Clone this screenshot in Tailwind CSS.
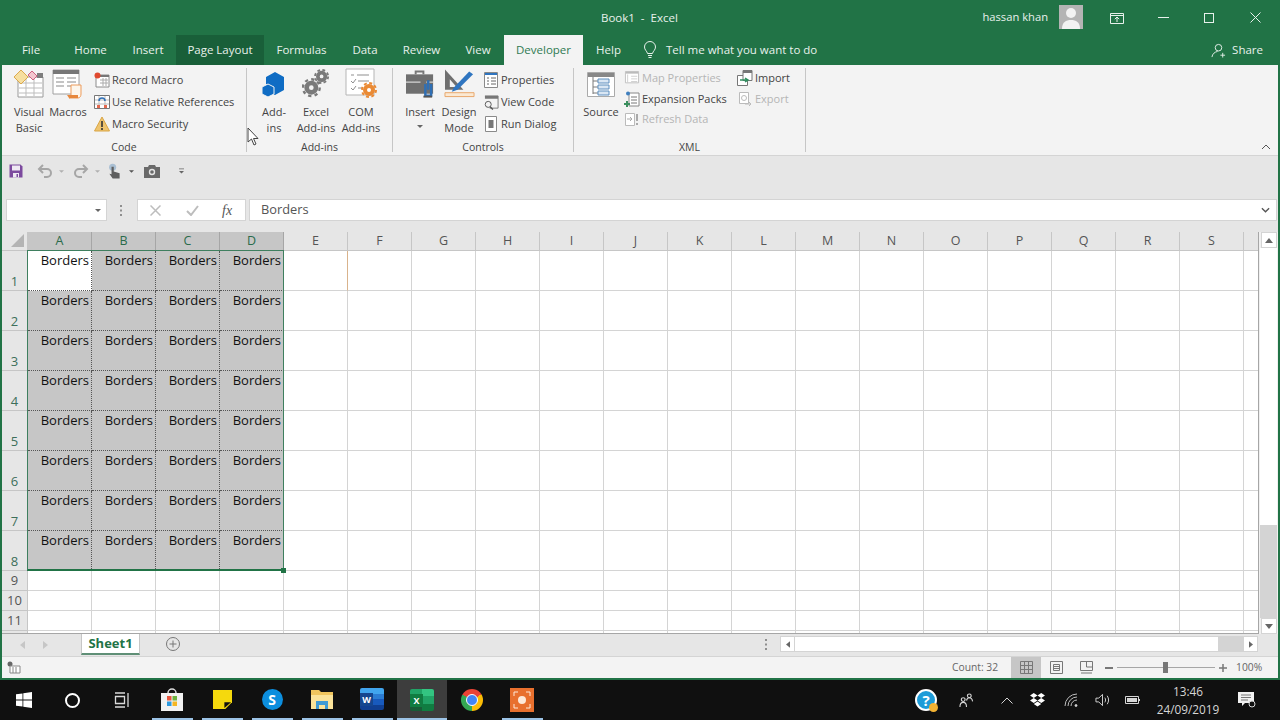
<!DOCTYPE html>
<html lang="en">
<head>
<meta charset="UTF-8">
<title>Book1 - Excel</title>
<script src="https://cdn.jsdelivr.net/npm/@tailwindcss/browser@4"></script>
</head>
<body class="bg-black">
<div class="w-[1280px] h-[720px] overflow-hidden flex flex-col font-['Open_Sans',sans-serif] text-[11px] text-[#444]">

  <!-- excel window -->
  <div class="h-[680px] flex flex-col bg-[#217346] px-[2px] pb-[2px]">

    <!-- title bar -->
    <div class="h-[35px] -mx-[2px] flex items-center text-[#e8f1ec] relative">
      <div class="absolute left-[601px] top-[9px] text-[11.5px] whitespace-pre">Book1  -  Excel</div>
      <div class="ml-auto flex items-center h-full">
        <span class="text-[11.2px] mr-[11px]">hassan khan</span>
        <div class="w-[24px] h-[24px] bg-[#b4b4b4] mr-[27px] mb-[2px] overflow-hidden">
          <svg viewBox="0 0 24 24" class="w-[24px] h-[24px]"><circle cx="12" cy="8" r="5" fill="#f2f2f2"/><path d="M3 24c0-7 4-9 9-9s9 2 9 9z" fill="#f2f2f2"/></svg>
        </div>
        <svg viewBox="0 0 14 12" class="w-[14px] h-[12px] mr-[34px]" fill="none" stroke="#e8f1ec"><path d="M.5 1.5h13v10H.5zM.5 3.5h13M7 10V5M4.8 7.2 7 5l2.2 2.2"/></svg>
        <div class="w-[11px] h-[1px] bg-[#e8f1ec] mr-[35px]"></div>
        <div class="w-[10px] h-[10px] border border-[#e8f1ec] mr-[36px]"></div>
        <svg viewBox="0 0 11 11" class="w-[11px] h-[11px] mr-[19px]" stroke="#e8f1ec"><path d="M.5.5l10 10M10.5.5l-10 10"/></svg>
      </div>
    </div>

    <!-- ribbon tabs -->
    <div class="h-[30px] -mx-[2px] flex text-[#e8f1ec] text-[11.5px]">
      <div class="ml-[8px] w-[46px] flex items-center justify-center">File</div>
      <div class="ml-[7px] w-[59px] flex items-center justify-center">Home</div>
      <div class="w-[56px] flex items-center justify-center">Insert</div>
      <div class="w-[88px] flex items-center justify-center bg-[#195f39]">Page Layout</div>
      <div class="w-[75px] flex items-center justify-center">Formulas</div>
      <div class="w-[52px] flex items-center justify-center">Data</div>
      <div class="w-[61px] flex items-center justify-center">Review</div>
      <div class="w-[52px] flex items-center justify-center">View</div>
      <div class="w-[79px] flex items-center justify-center bg-[#f3f3f3] text-[#2f7a52]">Developer</div>
      <div class="w-[51px] flex items-center justify-center">Help</div>
      <div class="ml-[9px] flex items-center">
        <svg viewBox="0 0 14 18" class="w-[14px] h-[18px] mr-[9px]" fill="none" stroke="#e8f1ec"><path d="M4.5 12.5C4 10 1.5 9 1.5 6a5.5 5.5 0 0 1 11 0c0 3-2.500 4-3 6.500zM5 14.500h4M5.500 16.500h3"/></svg>
        <span>Tell me what you want to do</span>
      </div>
      <div class="ml-auto mr-[17px] flex items-center">
        <svg viewBox="0 0 16 16" class="w-[15px] h-[15px] mr-[6px]" fill="none" stroke="#e8f1ec"><circle cx="8" cy="5" r="3.500"/><path d="M1 15c.5-3.500 3-5.500 6-6M10 13h5M12.500 10.500v5"/></svg>
        <span>Share</span>
      </div>
    </div>

    <!-- ribbon -->
    <div class="h-[90px] bg-[#f3f3f3] flex relative">

      <!-- Code -->
      <div class="w-[245px] flex flex-col border-r border-[#c6c6c6] my-[3px]">
        <div class="h-[72px] shrink-0 flex">
          <div class="w-[40px] ml-[7px] flex flex-col items-center">
            <svg viewBox="0 0 30 30" class="w-[30px] h-[30px] mt-[1px]">
              <path d="M4 8h25v20H4z" fill="#fff" stroke="#9a9a9a"/><path d="M5 14h23M5 19h23M5 24h23M12 9v18M20 9v18" stroke="#bdbdbd"/>
              <path d="M0 8 7 1l7 7-7 7z" fill="#f6dfa0" stroke="#dba94e"/><path d="M14 6l4-4 5 5-4 4z" fill="#f3c6cf" stroke="#cf5f7e"/><path d="M23 4h6v5h-6z" fill="#7d7d7d"/>
            </svg>
            <div class="mt-[5px] text-center leading-[16px]">Visual<br>Basic</div>
          </div>
          <div class="w-[40px] -ml-[1px] flex flex-col items-center">
            <svg viewBox="0 0 32 30" class="w-[32px] h-[30px] mt-[1px]">
              <path d="M1 1h26v24H1z" fill="#fff" stroke="#a0a0a0"/><path d="M1 1h26v4H1z" fill="#777"/><path d="M4 9h8M15 9h9M4 13h8M15 13h9M4 17h8M15 17h9" stroke="#c4c4c4" stroke-width="2"/>
              <path d="M19 16h10v9c0 2-1 4-3 4H17c2 0 2-2 2-4z" fill="#fdf6ec" stroke="#ed9b5a"/><path d="M15 26h11v3H17z" fill="#e8883c"/>
            </svg>
            <div class="mt-[5px] text-center leading-[16px]">Macros</div>
          </div>
          <div class="ml-[6px] mt-[1px] flex flex-col">
            <div class="h-[22px] flex items-center whitespace-nowrap">
              <svg viewBox="0 0 16 16" class="w-[16px] h-[16px] mr-[2px]"><path d="M2 3h13v12H2z" fill="#fff" stroke="#8c8c8c"/><path d="M2 3h13v2H2z" fill="#777"/><path d="M6 8h8M6 11h8M9 6v8M12 6v8" stroke="#aaa"/><circle cx="3.500" cy="3.500" r="3" fill="#e0492f"/></svg>Record Macro
            </div>
            <div class="h-[22px] flex items-center whitespace-nowrap">
              <svg viewBox="0 0 16 16" class="w-[16px] h-[16px] mr-[2px]"><path d="M.5 1.500h15v13H.5z" fill="#fff" stroke="#777"/><path d="M1 6h14M1 10h14M5 2v12M11 2v12" stroke="#bbb"/><path d="M3 11h3v3H3zM10 11h3v3h-3z" fill="#e4694f"/><path d="M5 7a3 3 0 0 1 6 0" stroke="#2f6fb5" stroke-width="1.500" fill="none"/></svg>Use Relative References
            </div>
            <div class="h-[22px] flex items-center whitespace-nowrap">
              <svg viewBox="0 0 16 16" class="w-[16px] h-[16px] mr-[2px]"><path d="M8 1l7.500 14H.5z" fill="#eec46f" stroke="#d9a545"/><path d="M8 5v6M8 12v2" stroke="#333" stroke-width="1.600"/></svg>Macro Security
            </div>
          </div>
        </div>
        <div class="shrink-0 text-center text-[10.5px] leading-[14px]">Code</div>
      </div>

      <!-- Add-ins -->
      <div class="w-[146px] flex flex-col border-r border-[#c6c6c6] my-[3px] relative">
        <div class="h-[72px] shrink-0 flex">
          <div class="w-[42px] ml-[6px] flex flex-col items-center">
            <svg viewBox="0 0 24 28" class="w-[24px] h-[28px] mt-[2px]">
              <path d="M13 2l9 5v13l-9 5-4-2V16l-5-2V7z" fill="#0f6cc4"/><path d="M6 14l6 3v7l-6 3-6-3v-7z" fill="#0f6cc4" stroke="#f3f3f3"/>
            </svg>
            <div class="mt-[6px] text-center leading-[16px]">Add-<br>ins</div>
          </div>
          <div class="w-[44px] flex flex-col items-center -ml-[1px]">
            <svg viewBox="0 0 30 30" class="w-[28px] h-[30px]" fill="none" stroke="#7a7a7a">
              <circle cx="21" cy="8" r="4" stroke-width="4"/><circle cx="21" cy="8" r="7" stroke-width="2" stroke-dasharray="3 2.500"/>
              <circle cx="10" cy="20" r="5" stroke-width="5"/><circle cx="10" cy="20" r="9" stroke-width="2.500" stroke-dasharray="3.500 3.500"/>
            </svg>
            <div class="mt-[6px] text-center leading-[16px] whitespace-nowrap">Excel<br>Add-ins</div>
          </div>
          <div class="w-[46px] flex flex-col items-center">
            <svg viewBox="0 0 32 30" class="w-[32px] h-[30px]" fill="none">
              <path d="M1 1h28v26H1z" fill="#fff" stroke="#b5b5b5"/><path d="M6 7h3M12 7h12M6 13l2 2 3-4M13 13h11M6 20l2 2 3-4M13 20h5" stroke="#8f8f8f"/>
              <circle cx="24" cy="22" r="4" stroke="#ea8a34" stroke-width="4"/><circle cx="24" cy="22" r="7" stroke="#ea8a34" stroke-width="2" stroke-dasharray="3 2.500"/>
            </svg>
            <div class="mt-[6px] text-center leading-[16px] whitespace-nowrap">COM<br>Add-ins</div>
          </div>
        </div>
        <div class="shrink-0 text-center text-[10.5px] leading-[14px]">Add-ins</div>
        <!-- mouse pointer -->
        <svg viewBox="0 0 13 20" class="absolute left-0 top-[59px] w-[13px] h-[20px]" fill="#fff" stroke="#444"><path d="M1 1v14l3.500-3 2.500 6 2-1-2.500-5.500H11z"/></svg>
      </div>

      <!-- Controls -->
      <div class="w-[181px] flex flex-col border-r border-[#c6c6c6] my-[3px]">
        <div class="h-[72px] shrink-0 flex">
          <div class="w-[44px] ml-[5px] flex flex-col items-center">
            <svg viewBox="0 0 32 30" class="w-[31px] h-[30px] mt-[2px]">
              <path d="M11 4V1h8v3" fill="none" stroke="#777" stroke-width="2"/><path d="M1 4h28v20H1z" fill="#6f6f6f"/><path d="M1 12h15M22 12h7" stroke="#f3f3f3"/>
              <path d="M24 10v10M21 14v12h6V14" stroke="#2f6fb5" stroke-width="2.500" fill="none"/><path d="M19 27h9" stroke="#555" stroke-width="2"/>
            </svg>
            <div class="mt-[4px] text-center leading-[16px]">Insert</div>
            <svg viewBox="0 0 6 3" class="w-[6px] h-[3px] mt-[5px]"><path d="M0 0h6L3 3z" fill="#666"/></svg>
          </div>
          <div class="w-[34px] flex flex-col items-center">
            <svg viewBox="0 0 32 30" class="w-[31px] h-[30px]">
              <path d="M1 1l19 21H1z" fill="#6f6f6f"/><path d="M6 11l7 8H6z" fill="#f3f3f3"/><path d="M10 20 26 3l4 3-16 16-6 2z" fill="#2f75c0"/>
              <path d="M1 25h30v4H1z" fill="#fbe9d3" stroke="#e8a66a"/>
            </svg>
            <div class="mt-[6px] text-center leading-[16px]">Design<br>Mode</div>
          </div>
          <div class="ml-[8px] mt-[1px] flex flex-col">
            <div class="h-[22px] flex items-center whitespace-nowrap">
              <svg viewBox="0 0 14 16" class="w-[14px] h-[16px] mr-[3px]"><path d="M.5.5h13v15H.5z" fill="#fff" stroke="#8a8a8a"/><path d="M1 1h12v2H1z" fill="#2f75c0"/><path d="M3 6h2M7 6h5M3 9h2M7 9h5M3 12h2M7 12h5" stroke="#666"/></svg>Properties
            </div>
            <div class="h-[22px] flex items-center whitespace-nowrap">
              <svg viewBox="0 0 16 16" class="w-[15px] h-[15px] mr-[2px]" fill="none"><path d="M1 1h14v13H6" stroke="#777"/><path d="M1 1h14v3H1z" fill="#777"/><circle cx="4.500" cy="10" r="3.200" stroke="#555"/><path d="M6.500 12.500l3 3" stroke="#555" stroke-width="1.500"/></svg>View Code
            </div>
            <div class="h-[22px] flex items-center whitespace-nowrap">
              <svg viewBox="0 0 14 16" class="w-[14px] h-[16px] mr-[3px]"><path d="M1.500.5h11v15h-11z" fill="#fff" stroke="#8a8a8a"/><path d="M4.500 4h5v8h-5z" fill="#777"/></svg>Run Dialog
            </div>
          </div>
        </div>
        <div class="shrink-0 text-center text-[10.5px] leading-[14px]">Controls</div>
      </div>

      <!-- XML -->
      <div class="w-[232px] flex flex-col border-r border-[#c6c6c6] my-[3px]">
        <div class="h-[72px] shrink-0 flex">
          <div class="w-[44px] ml-[5px] flex flex-col items-center">
            <svg viewBox="0 0 28 26" class="w-[28px] h-[26px] mt-[4px]" fill="none">
              <path d="M.5.5h27v24H.5z" fill="#fff" stroke="#aaa"/><path d="M1 1h26v4H1z" fill="#888"/>
              <path d="M6 5v17M6 9h5M6 15h5M6 21h5" stroke="#7b7b7b"/><path d="M11 7h11v4H11zM11 13h11v4H11zM11 19h11v4H11z" fill="#d9e6f3" stroke="#5e8fbe"/>
            </svg>
            <div class="mt-[6px] text-center leading-[16px]">Source</div>
          </div>
          <div class="ml-[1px] w-[113px] flex flex-col">
            <div class="h-[20.500px] flex items-center whitespace-nowrap text-[#b5b5b5]">
              <svg viewBox="0 0 16 16" class="w-[16px] h-[14px] mr-[2px]"><path d="M.5.5h15v13H.5z" fill="#fff" stroke="#bbb"/><path d="M1 1h14v2H1z" fill="#bbb"/><path d="M7 6h7M7 9h7M7 12h7M3 4v9" stroke="#ccc"/></svg>Map Properties
            </div>
            <div class="h-[20.500px] flex items-center whitespace-nowrap">
              <svg viewBox="0 0 16 16" class="w-[16px] h-[16px] mr-[2px]"><path d="M5 2h10v13H5z" fill="#fff" stroke="#888"/><path d="M7 6h6M7 9h6M7 12h6" stroke="#777"/><circle cx="4" cy="2.500" r="2" fill="#3f7fbe"/><path d="M0 13h6M3 10v6" stroke="#3a8f5e" stroke-width="2"/></svg>Expansion Packs
            </div>
            <div class="h-[20.500px] flex items-center whitespace-nowrap text-[#b5b5b5]">
              <svg viewBox="0 0 16 16" class="w-[16px] h-[16px] mr-[2px]"><path d="M1.500 2.500h9v12h-9z" fill="#fff" stroke="#bbb"/><path d="M3 8h5M6 6l2 2-2 2" stroke="#aaa" fill="none"/><path d="M13 3v7M13 12v2" stroke="#aaa" stroke-width="2"/></svg>Refresh Data
            </div>
          </div>
          <div class="flex flex-col">
            <div class="h-[20.500px] flex items-center whitespace-nowrap">
              <svg viewBox="0 0 16 16" class="w-[16px] h-[16px] mr-[2px]"><path d="M.5 5.500h10v10H.5z" fill="#fff" stroke="#777"/><path d="M6 .5h9v10H6z" fill="#fff" stroke="#777"/><path d="M6 1h9v2H6z" fill="#777"/><path d="M3 10h7M8 8l3 2-3 2" stroke="#2f8f5e" fill="none" stroke-width="1.500"/></svg>Import
            </div>
            <div class="h-[20.500px] flex items-center whitespace-nowrap text-[#b5b5b5]">
              <svg viewBox="0 0 16 16" class="w-[16px] h-[16px] mr-[2px]"><path d="M2.500 1.500h9v11h-9z" fill="#fff" stroke="#bbb"/><circle cx="7" cy="7" r="2.500" fill="none" stroke="#bbb"/><path d="M8 13h6M12 11l2 2-2 2" stroke="#bbb" fill="none"/></svg>Export
            </div>
          </div>
        </div>
        <div class="shrink-0 text-center text-[10.5px] leading-[14px]">XML</div>
      </div>

      <svg viewBox="0 0 10 6" class="absolute right-[7px] bottom-[5px] w-[10px] h-[6px]" fill="none" stroke="#555"><path d="M1 5l4-4 4 4"/></svg>
    </div>

    <!-- quick access toolbar -->
    <div class="h-[35px] bg-[#e6e6e6] border-t border-[#d4d4d4] flex items-center pb-[4px]">
      <svg viewBox="0 0 14 14" class="w-[14px] h-[14px] ml-[7px]"><path d="M.5.5h11l2 2v11H.5z" fill="#7c4a9e"/><path d="M3 1.500h8v5H3z" fill="#efe9f3"/><path d="M4 9h6v4.500H4z" fill="#efe9f3"/><path d="M7.500 10h1.500v3H7.500z" fill="#7c4a9e"/></svg>
      <svg viewBox="0 0 16 14" class="w-[16px] h-[14px] ml-[14px]" fill="none" stroke="#a6a6a6" stroke-width="2"><path d="M6 1 2 5l4 4M2 5h8a4 4 0 0 1 0 8H7"/></svg>
      <svg viewBox="0 0 6 3" class="w-[5px] h-[3px] ml-[6px]"><path d="M0 0h6L3 3z" fill="#b0b0b0"/></svg>
      <svg viewBox="0 0 16 14" class="w-[16px] h-[14px] ml-[9px]" fill="none" stroke="#a6a6a6" stroke-width="2"><path d="M10 1l4 4-4 4M14 5H6a4 4 0 0 0 0 8h3"/></svg>
      <svg viewBox="0 0 6 3" class="w-[5px] h-[3px] ml-[6px]"><path d="M0 0h6L3 3z" fill="#b0b0b0"/></svg>
      <svg viewBox="0 0 14 17" class="w-[13px] h-[17px] ml-[8px]"><circle cx="5" cy="4" r="3.800" fill="#a9bfd3"/><path d="M3.800 3.500h2.400v5l6.300 2v5.500H5L1.500 11l2.300.5z" fill="#5f5f5f"/></svg>
      <svg viewBox="0 0 6 3" class="w-[5px] h-[3px] ml-[8px]"><path d="M0 0h6L3 3z" fill="#555"/></svg>
      <svg viewBox="0 0 16 13" class="w-[16px] h-[13px] ml-[10px]"><path d="M0 2h4l1-2h6l1 2h4v11H0z" fill="#6a6a6a"/><circle cx="8" cy="7" r="3.200" fill="#e6e6e6"/><circle cx="8" cy="7" r="1.800" fill="#6a6a6a"/></svg>
      <svg viewBox="0 0 6 6" class="w-[5px] h-[6px] ml-[19px]"><path d="M0 0h6v1H0zM0 3h6L3 6z" fill="#666"/></svg>
    </div>

    <!-- formula bar -->
    <div class="h-[42px] bg-[#e6e6e6] flex items-center pb-[2px]">
      <div class="w-[101px] h-[22px] ml-[4px] bg-white border border-[#d4d4d4] flex items-center justify-end pr-[5px]">
        <svg viewBox="0 0 6 3" class="w-[6px] h-[3px]"><path d="M0 0h6L3 3z" fill="#666"/></svg>
      </div>
      <svg viewBox="0 0 2 11" class="w-[2px] h-[11px] ml-[13px]" fill="#8f8f8f"><path d="M0 0h2v2H0zM0 4.500h2v2H0zM0 9h2v2H0z"/></svg>
      <div class="w-[109px] h-[22px] ml-[15px] bg-white border border-[#d4d4d4] flex items-center">
        <svg viewBox="0 0 11 11" class="w-[11px] h-[11px] ml-[12px]" stroke="#bdbdbd" stroke-width="1.500"><path d="M.5.5l10 10M10.500.5l-10 10"/></svg>
        <svg viewBox="0 0 13 11" class="w-[13px] h-[11px] ml-[25px]" fill="none" stroke="#bdbdbd" stroke-width="2"><path d="M1 6l4 4 7-9"/></svg>
        <span class="ml-[23px] font-['Liberation_Serif',serif] italic text-[14px] text-[#555]">fx</span>
      </div>
      <div class="flex-1 h-[22px] ml-[3px] mr-[1px] bg-white border border-[#d4d4d4] flex items-center pl-[11px] pr-[6px] text-[12.800px] text-[#555]">
        <span>Borders</span>
        <svg viewBox="0 0 10 6" class="w-[9px] h-[6px] ml-auto" fill="none" stroke="#555" stroke-width="1.500"><path d="M1 1l4 4 4-4"/></svg>
      </div>
    </div>

    <!-- sheet area -->
    <div class="h-[402px] flex bg-[#f0f0f0]">
      <div id="sheet" class="relative w-[1257px] h-[402px] bg-white border-r border-b border-[#a6a6a6] overflow-hidden grid grid-cols-[26px_repeat(19,64px)_14px] grid-rows-[19px_repeat(8,40px)_repeat(3,20px)_3px] text-[13px]">
        <!-- cells are filled in by the script below -->
      </div>
      <!-- vertical scrollbar -->
      <div class="w-[19px] flex flex-col items-center">
        <div class="w-[16px] h-[16px] bg-white border border-[#d4d4d4] flex items-center justify-center">
          <svg viewBox="0 0 8 5" class="w-[8px] h-[5px]"><path d="M0 5l4-5 4 5z" fill="#666"/></svg>
        </div>
        <div class="w-[17px] flex-1 flex flex-col bg-[#d4d4d4]">
          <div class="h-[277px] bg-white"></div>
        </div>
        <div class="w-[16px] h-[16px] bg-white border border-[#d4d4d4] flex items-center justify-center">
          <svg viewBox="0 0 8 5" class="w-[8px] h-[5px]"><path d="M0 0l4 5 4-5z" fill="#666"/></svg>
        </div>
      </div>
    </div>

    <!-- sheet tabs + horizontal scrollbar -->
    <div class="h-[22px] bg-[#e6e6e6] flex items-start text-[#666]">
      <svg viewBox="0 0 5 8" class="w-[5px] h-[8px] mt-[7px] ml-[18px]"><path d="M5 0 0 4l5 4z" fill="#c6c6c6"/></svg>
      <svg viewBox="0 0 5 8" class="w-[5px] h-[8px] mt-[7px] ml-[18px]"><path d="M0 0l5 4-5 4z" fill="#c6c6c6"/></svg>
      <div class="w-[59px] h-[21px] ml-[33px] bg-white border-x border-[#c6c6c6] border-b-2 border-b-[#5f8f76] flex items-center justify-center font-bold text-[13px] text-[#217346]">Sheet1</div>
      <svg viewBox="0 0 14 14" class="w-[14px] h-[14px] ml-[26px] mt-[3px]" fill="none" stroke="#777"><circle cx="7" cy="7" r="6.500"/><path d="M3.500 7h7M7 3.500v7"/></svg>
      <svg viewBox="0 0 2 11" class="w-[2px] h-[11px] ml-[585px] mt-[5px]" fill="#8f8f8f"><path d="M0 0h2v2H0zM0 4.500h2v2H0zM0 9h2v2H0z"/></svg>
      <div class="ml-[13px] w-[478px] h-[16px] mt-[2px] flex">
        <div class="w-[15px] bg-white border border-[#d4d4d4] flex items-center justify-center"><svg viewBox="0 0 5 8" class="w-[4px] h-[7px]"><path d="M5 0 0 4l5 4z" fill="#666"/></svg></div>
        <div class="w-[423px] bg-white border-y border-[#d4d4d4]"></div>
        <div class="w-[25px] bg-[#d4d4d4]"></div>
        <div class="w-[15px] bg-white border border-[#d4d4d4] flex items-center justify-center"><svg viewBox="0 0 5 8" class="w-[4px] h-[7px]"><path d="M0 0l5 4-5 4z" fill="#666"/></svg></div>
      </div>
    </div>

    <!-- status bar -->
    <div class="flex-1 bg-[#f3f3f3] border-t border-[#d4d4d4] flex items-center text-[#666] text-[10.300px]">
      <svg viewBox="0 0 14 13" class="w-[14px] h-[13px] ml-[5px]"><circle cx="3" cy="3" r="2.500" fill="#666"/><path d="M3 5h10v7H3z" fill="#fff" stroke="#888"/><path d="M6 6v6M9 6v6" stroke="#888"/></svg>
      <span class="ml-[931px] w-[59px]">Count: 32</span>
      <div class="w-[30px] h-full bg-[#c6c6c6] flex items-center justify-center">
        <svg viewBox="0 0 13 13" class="w-[13px] h-[13px]" fill="none" stroke="#777"><path d="M.5.5h12v12H.5zM4.500 1v11M8.500 1v11M1 4.500h11M1 8.500h11"/></svg>
      </div>
      <div class="w-[30px] flex justify-center">
        <svg viewBox="0 0 13 13" class="w-[13px] h-[13px]" fill="none" stroke="#777"><path d="M.5.5h12v12H.5zM3.500 3.500h6v6h-6zM3.500 5.500h6M3.500 7.500h6"/></svg>
      </div>
      <div class="w-[30px] flex justify-center">
        <svg viewBox="0 0 13 13" class="w-[13px] h-[13px]" fill="none" stroke="#777"><path d="M.5 9.500V.5h12v9M.5 9.500h12M6.500 1v5h6M1 12h11" /></svg>
      </div>
      <div class="w-[8px] h-[2px] bg-[#777] ml-[4px]"></div>
      <div class="w-[98px] h-[1px] bg-[#a6a6a6] ml-[4px] relative">
        <div class="absolute left-[46px] -top-[5px] w-[5px] h-[11px] bg-[#777]"></div>
      </div>
      <svg viewBox="0 0 8 8" class="w-[8px] h-[8px] ml-[4px]" stroke="#777" stroke-width="1.500"><path d="M0 4h8M4 0v8"/></svg>
      <span class="ml-[9px]">100%</span>
    </div>
  </div>

  <!-- windows taskbar -->
  <div class="h-[40px] bg-[#101010] flex items-center text-[#d6d6d6] text-[11.800px]">
    <div class="w-[47px] flex justify-center">
      <svg viewBox="0 0 16 16" class="w-[16px] h-[16px]" fill="#fff"><path d="M0 2.300 6.500 1.400v6.200H0zM7.300 1.300 16 0v7.600H7.300zM0 8.400h6.500v6.200L0 13.700zM7.300 8.400H16V16l-8.700-1.300z"/></svg>
    </div>
    <div class="w-[50px] flex justify-center">
      <div class="w-[15px] h-[15px] rounded-full border-2 border-white"></div>
    </div>
    <div class="w-[50px] flex justify-center">
      <svg viewBox="0 0 16 16" class="w-[16px] h-[16px]" fill="none" stroke="#d9d9d9"><path d="M1 1h10M1 15h10M1.500 4.500h9v7h-9zM14 1v14" stroke-width="1.300"/></svg>
    </div>
    <div class="w-[50px] h-full flex flex-col items-center justify-end">
      <svg viewBox="0 0 24 24" class="w-[24px] h-[24px] mb-[7px]"><path d="M8 6a4 4 0 0 1 8 0" fill="none" stroke="#ddd" stroke-width="1.500"/><path d="M1 6h22v18H1z" fill="#f2f2f2"/><path d="M7 9h4.500v4.500H7z" fill="#e8553d"/><path d="M12.500 9H17v4.500h-4.500z" fill="#6cb33f"/><path d="M7 14.500h4.500V19H7z" fill="#2d9ae0"/><path d="M12.500 14.500H17V19h-4.500z" fill="#f5b622"/></svg>
      <div class="w-[41px] h-[2px] bg-[#9cc3e6]"></div>
    </div>
    <div class="w-[50px] h-full flex flex-col items-center justify-end">
      <svg viewBox="0 0 20 20" class="w-[19px] h-[19px] mb-[9px]"><path d="M0 0h20v13l-7 7H0z" fill="#f5d90d"/><path d="M12 19v-6h7z" fill="#111"/></svg>
      <div class="w-[41px] h-[2px] bg-[#9cc3e6]"></div>
    </div>
    <div class="w-[50px] h-full flex flex-col items-center justify-end">
      <div class="w-[21px] h-[21px] mb-[8px] rounded-full bg-[#0c8ede] text-white font-bold text-[14px] flex items-center justify-center">S</div>
      <div class="w-[41px] h-[2px] bg-[#9cc3e6]"></div>
    </div>
    <div class="w-[50px] h-full flex flex-col items-center justify-end">
      <svg viewBox="0 0 22 19" class="w-[22px] h-[19px] mb-[9px]"><path d="M0 0h8l2 2h12v17H0z" fill="#f0c55e"/><path d="M0 5h22v14H0z" fill="#fbe39a"/><path d="M5 11h12v8h-3v-4H8v4H5z" fill="#3f9bd5"/></svg>
      <div class="w-[41px] h-[2px] bg-[#9cc3e6]"></div>
    </div>
    <div class="w-[50px] h-full flex flex-col items-center justify-end">
      <div class="relative w-[24px] h-[22px] mb-[8px] flex flex-col rounded-[2px] overflow-hidden">
        <div class="h-1/4 bg-[#41a5ee]"></div><div class="h-1/4 bg-[#2b7cd3]"></div><div class="h-1/4 bg-[#185abd]"></div><div class="h-1/4 bg-[#103f91]"></div>
        <div class="absolute left-0 top-[5px] w-[13px] h-[13px] bg-[#15468f] text-white font-bold text-[9px] leading-[13px] text-center">W</div>
      </div>
      <div class="w-[41px] h-[2px] bg-[#9cc3e6]"></div>
    </div>
    <div class="w-[50px] h-full bg-[#3d3d3d] flex flex-col items-center justify-end">
      <div class="relative w-[24px] h-[22px] mb-[7px] grid grid-cols-2 grid-rows-3 rounded-[2px] overflow-hidden">
        <div class="bg-[#21a366]"></div><div class="bg-[#33c481]"></div><div class="bg-[#107c41]"></div><div class="bg-[#21a366]"></div><div class="bg-[#185c37]"></div><div class="bg-[#107c41]"></div>
        <div class="absolute left-0 top-[5px] w-[13px] h-[13px] bg-[#107c41] text-white font-bold text-[9px] leading-[13px] text-center">X</div>
      </div>
      <div class="w-full h-[2px] bg-[#9cc3e6]"></div>
    </div>
    <div class="w-[50px] h-full flex flex-col items-center justify-center">
      <div class="w-[22px] h-[22px] rounded-full bg-[conic-gradient(from_-60deg,#ea4335_0_33%,#fbbc05_33%_66%,#34a853_66%)] flex items-center justify-center">
        <div class="w-[12px] h-[12px] rounded-full bg-[#4285f4] border-[1.500px] border-white"></div>
      </div>
    </div>
    <div class="w-[50px] h-full flex flex-col items-center justify-end">
      <div class="relative w-[24px] h-[24px] mb-[6px] bg-[#e8702e] flex items-center justify-center">
        <div class="w-[8px] h-[8px] rounded-full bg-[#fde9d9]"></div>
        <svg viewBox="0 0 24 24" class="absolute inset-0 w-[24px] h-[24px]" fill="none" stroke="#fde9d9"><path d="M4 8V4h4M16 4h4v4M20 16v4h-4M8 20H4v-4"/></svg>
      </div>
      <div class="w-[41px] h-[2px] bg-[#9cc3e6]"></div>
    </div>

    <!-- tray -->
    <div class="ml-auto flex items-center h-full">
      <div class="relative w-[22px] h-[22px] rounded-full bg-[#1d9bd8] border-2 border-white text-white font-bold text-[15px] flex items-center justify-center mr-[22px]">?
        <div class="absolute -right-[3px] -bottom-[3px] w-[9px] h-[9px] rounded-full bg-[#f2b233]"></div>
      </div>
      <svg viewBox="0 0 16 16" class="w-[15px] h-[15px] mr-[27px]" fill="none" stroke="#d6d6d6" stroke-width="1.200"><circle cx="4.500" cy="7" r="2"/><circle cx="11" cy="3" r="2"/><path d="M1 15c0-3 1-5 3.500-5s3.500 2 3.500 5M8 8c.5-2 1.500-3 3-3s3 1 3.500 4"/></svg>
      <svg viewBox="0 0 12 7" class="w-[12px] h-[7px] mr-[17px]" fill="none" stroke="#d6d6d6"><path d="M.5 6.500 6 1l5.500 5.500"/></svg>
      <svg viewBox="0 0 16 15" class="w-[15px] h-[14px] mr-[19px]" fill="#fff"><path d="M4 0 0 2.700 4 5.400 8 2.700zM12 0 8 2.700l4 2.700 4-2.700zM0 8l4 2.700L8 8 4 5.400zM16 8l-4 2.700L8 8l4-2.600zM4 11.700 8 14.400l4-2.700L8 9z"/></svg>
      <svg viewBox="0 0 14 14" class="w-[14px] h-[14px] mr-[17px]" fill="none" stroke="#bdbdbd"><path d="M1 13A12 12 0 0 1 13 1M4 13a9 9 0 0 1 9-9M7 13a6 6 0 0 1 6-6"/><circle cx="12" cy="12.500" r="1" fill="#fff"/></svg>
      <svg viewBox="0 0 16 14" class="w-[15px] h-[14px] mr-[15px]" fill="none" stroke="#d6d6d6"><path d="M1 5h3l4-4v12L4 9H1zM10.500 4.500c1 1.500 1 3.500 0 5M13 2.500c2 3 2 6 0 9"/></svg>
      <svg viewBox="0 0 16 8" class="w-[16px] h-[8px] mr-[13px]" fill="none"><path d="M.5.5h13v7H.5z" stroke="#d6d6d6"/><path d="M2 2h10v4H2z" fill="#d6d6d6"/><path d="M14.500 3v2" stroke="#d6d6d6"/></svg>
      <div class="w-[68px] text-center leading-[18px] mr-[16px]">13:46<br>24/09/2019</div>
      <svg viewBox="0 0 18 16" class="w-[18px] h-[16px] mr-[24px]"><path d="M0 0h16v11H7l-3 3v-3H0z" fill="#f2f2f2"/><path d="M3 3h10M3 5.500h10M3 8h7" stroke="#777"/><circle cx="14" cy="12" r="3" fill="#101010" stroke="#d6d6d6"/></svg>
    </div>
  </div>
</div>

<script>
  // build the sheet cells, there are too many to write by hand
  const sheet = document.getElementById('sheet');
  const letters = 'ABCDEFGHIJKLMNOPQRS'.split('');

  function add(cls, text) {
    const el = document.createElement('div');
    el.className = cls;
    if (text) el.textContent = text;
    sheet.appendChild(el);
    return el;
  }

  add('bg-[#e6e6e6] border-r border-b border-[#c6c6c6] relative',
      '').innerHTML = '<svg viewBox="0 0 12 12" class="absolute right-[3px] bottom-[3px] w-[13px] h-[13px]"><path d="M12 0v12H0z" fill="#b4b4b4"/></svg>';
  letters.forEach((l, i) => {
    if (i < 4) add('bg-[#c6c6c6] border-r border-[#a6a6a6] flex items-center justify-center text-[#2a6b4b] text-[12.500px]', l);
    else add('bg-[#e6e6e6] border-r border-b border-[#c6c6c6] flex items-center justify-center text-[#555] text-[12.500px]', l);
  });
  add('bg-[#e6e6e6] border-b border-[#c6c6c6]');

  for (let r = 1; r <= 12; r++) {
    const label = r <= 11 ? String(r) : '';
    if (r <= 8) add('bg-[#e6e6e6] border-r border-b border-[#c6c6c6] flex items-end justify-center text-[#3d6f5a] text-[13px] leading-[18px]', label);
    else add('bg-[#e6e6e6] border-r border-b border-[#c6c6c6] flex items-center justify-center text-[#555] text-[13px]', label);
    for (let c = 0; c < 19; c++) {
      if (r <= 8 && c < 4) {
        const bg = r === 1 && c === 0 ? 'bg-white' : 'bg-[#c6c6c6]';
        add(bg + ' border-r border-b border-dotted border-[#555] text-right pr-[2px] text-[#111] leading-[19px]', 'Borders');
      } else if (r === 1 && c === 5) {
        add('border-r border-b border-[#d4d4d4] border-l border-l-[#d9b38c] -ml-[1px]');
      } else {
        add('border-r border-b border-[#d4d4d4]');
      }
    }
    add('border-b border-[#d4d4d4]');
  }

  // green outline round the selected range A1:D8
  add('absolute left-[25px] top-[18px] w-[257px] h-[321px] border border-[#3f7f5f] border-b-2 border-b-[#217346] pointer-events-none');
  add('absolute left-[279px] top-[336px] w-[5px] h-[5px] bg-[#217346] pointer-events-none');
</script>
</body>
</html>
